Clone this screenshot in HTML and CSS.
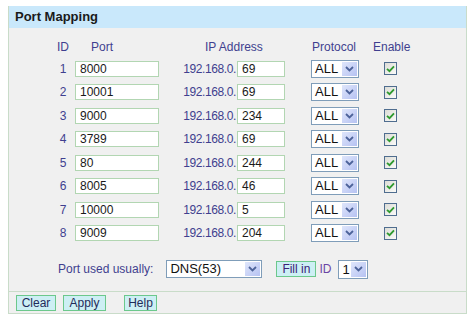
FILE: index.html
```html
<!DOCTYPE html>
<html lang="en">
<head>
    <meta charset="UTF-8">
    <title>Port Mapping</title>
    <link rel="stylesheet" href="styles.css">
</head>
<body>
    <div class="panel">
        <div class="panel_title">Port Mapping</div>

        <div class="panel_body">
            <div class="map_grid">
                <div class="head id_col">ID</div>
                <div class="head port_head">Port</div>
                <div class="head ip_head">IP Address</div>
                <div class="head proto_head">Protocol</div>
                <div class="head enable_head">Enable</div>
            </div>

            <div class="map_grid rows" id="rows"></div>

            <div class="usual_row">
                <span class="label">Port used usually:</span>
                <span class="select dns_select"><span class="sel_text">DNS(53)</span><span class="sel_btn"><svg width="9" height="6" viewBox="0 0 9 6"><path d="M1 1 L4.5 4.5 L8 1" fill="none" stroke="#4d639a" stroke-width="1.8"/></svg></span></span>
                <span class="btn fill_btn">Fill in</span>
                <span class="label id_label">ID</span>
                <span class="select id_select"><span class="sel_text">1</span><span class="sel_btn"><svg width="9" height="6" viewBox="0 0 9 6"><path d="M1 1 L4.5 4.5 L8 1" fill="none" stroke="#4d639a" stroke-width="1.8"/></svg></span></span>
            </div>
        </div>

        <div class="panel_foot">
            <span class="btn clear_btn">Clear</span>
            <span class="btn apply_btn">Apply</span>
            <span class="btn help_btn">Help</span>
        </div>
    </div>

<script src="script.js"></script>
</body>
</html>
```

FILE: script.js
```js
var mappings = [
    ['8000', '69'],
    ['10001', '69'],
    ['9000', '234'],
    ['3789', '69'],
    ['80', '244'],
    ['8005', '46'],
    ['10000', '5'],
    ['9009', '204']
];

var arrow = '<svg width="9" height="6" viewBox="0 0 9 6"><path d="M1 1 L4.5 4.5 L8 1" fill="none" stroke="#4d639a" stroke-width="1.8"/></svg>';
var check = '<svg width="9" height="8" viewBox="0 0 9 8"><path d="M1 3.8 L3.5 6.2 L8 1.4" fill="none" stroke="#2f9a2f" stroke-width="1.8"/></svg>';

var rows = document.querySelector('#rows');

mappings.forEach(function (m, i) {
    rows.innerHTML += `
        <div class="num id_col">${i + 1}</div>
        <div class="cell"><span class="field port_field">${m[0]}</span></div>
        <div class="num ip_prefix">192.168.0.</div>
        <div class="cell"><span class="field ip_field">${m[1]}</span></div>
        <div class="cell"><span class="select proto_select"><span class="sel_text">ALL</span><span class="sel_btn">${arrow}</span></span></div>
        <div class="cell enable_cell"><span class="checkbox">${check}</span></div>
    `;
});
```

FILE: styles.css
```css
body {
    margin: 0;
    font-family: "Liberation Sans", Arial, sans-serif;
    font-size: 12px;
    background-color: white;
}
.panel {
    width: 457px;
    margin: 6px 0 0 8px;
    border: 1px solid #c9dcc9;
    border-top: none;
    background-color: #f0f0f0;
}
.panel_title {
    height: 22px;
    line-height: 22px;
    padding-left: 6px;
    background-color: #c9e8fb;
    font-size: 13px;
    font-weight: bold;
    color: #1a1a1a;
}
.panel_body {
    padding: 9px 0 11px 45px;
}
.map_grid {
    display: grid;
    grid-template-columns: 21px 85px 77px 74px 61px 36px;
    align-items: center;
}
.head {
    height: 19px;
    line-height: 20px;
    color: #3f3f8f;
}
.id_col {
    padding-right: 3px;
    text-align: center;
}
.port_head {
    padding-left: 16px;
}
.ip_head {
    grid-column: span 2;
    padding-left: 45px;
}
.proto_head {
    padding-left: 1px;
}
.enable_head {
    padding-left: 1px;
}
.rows {
    grid-auto-rows: 23.5px;
    margin-top: 1px;
}
.num {
    color: #3f3f8f;
}
.ip_prefix {
    text-align: right;
    padding-right: 1px;
    letter-spacing: -0.4px;
}
.cell {
    display: flex;
    align-items: center;
}
.enable_cell {
    justify-content: center;
}
.field {
    box-sizing: border-box;
    height: 16px;
    line-height: 14px;
    padding-left: 4px;
    border: 1px solid #b2d6b2;
    background-color: white;
    color: #1a1a1a;
}
.port_field {
    width: 84px;
}
.ip_field {
    width: 48px;
}
.select {
    box-sizing: border-box;
    display: flex;
    align-items: stretch;
    height: 18px;
    border: 1px solid #7f9db9;
    background-color: white;
    color: #111;
}
.sel_text {
    flex: 1;
    line-height: 16px;
    padding-left: 3px;
    font-size: 13px;
}
.sel_btn {
    width: 15px;
    margin: 1px;
    display: flex;
    align-items: center;
    justify-content: center;
    background: linear-gradient(135deg, #dfe6fb, #b6c2f2);
}
.proto_select {
    width: 48px;
}
.checkbox {
    box-sizing: border-box;
    width: 13px;
    height: 13px;
    display: flex;
    align-items: center;
    justify-content: center;
    border: 1px solid #4f6d8f;
    background: linear-gradient(135deg, #dcdcd6, #fbfbf9);
}
.usual_row {
    display: flex;
    align-items: center;
    height: 22px;
    margin-top: 13px;
    padding-left: 4px;
}
.label {
    color: #3f3f8f;
}
.dns_select {
    width: 96px;
    margin-left: 13px;
}
.btn {
    box-sizing: border-box;
    display: inline-block;
    height: 16px;
    line-height: 14px;
    border: 1px solid #6cc88c;
    background-color: #cdeff4;
    color: #1f2b5a;
    text-align: center;
}
.fill_btn {
    width: 40px;
    margin-left: 14px;
    color: #3b2277;
}
.id_label {
    margin-left: 3px;
    color: #6a44a4;
}
.id_select {
    width: 30px;
    height: 19px;
    margin-left: 7px;
}
.id_select .sel_text {
    line-height: 17px;
}
.panel_foot {
    display: flex;
    align-items: center;
    height: 21px;
    padding-left: 7px;
    border-top: 1px solid #c9dcc9;
}
.clear_btn {
    width: 40px;
}
.apply_btn {
    width: 43px;
    margin-left: 7px;
}
.help_btn {
    width: 33px;
    margin-left: 18px;
}
```
